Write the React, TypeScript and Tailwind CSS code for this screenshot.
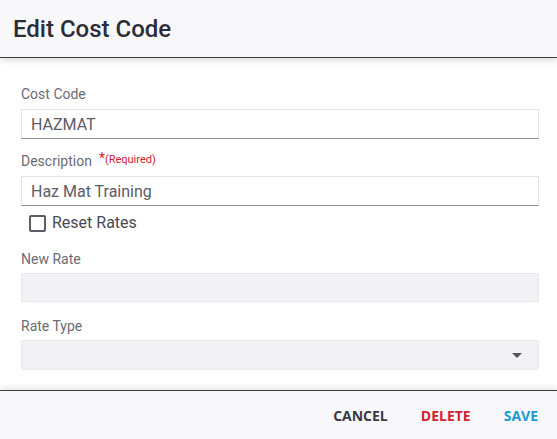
import { useState } from "react";

const Label = ({ children }: { children: React.ReactNode }) => (
  <label className="block text-[14px] leading-4 text-[#6b6b75]">{children}</label>
);

export default function App() {
  const [reset, setReset] = useState(false);

  return (
    <div className="w-[557px] h-[439px] bg-white flex flex-col overflow-hidden font-['Roboto',sans-serif]">
      <div className="relative z-10 h-[58px] shrink-0 bg-[#f8f8fa] border-b border-[#3b3b46] shadow-[0_3px_6px_rgba(0,0,0,0.12)] flex items-center pl-[13px]">
        <h1 className="text-[24px] font-medium text-[#2c2c38]">Edit Cost Code</h1>
      </div>

      <div className="flex-1 pl-[21px] pr-[18px] pt-[28px]">
        <Label>Cost Code</Label>
        <input
          defaultValue="HAZMAT"
          className="mt-[7px] block w-full h-[30px] px-[9px] text-[16px] text-[#5c5c66] border border-[#e4e4e8] border-b-[#8c8c94] outline-none"
        />

        <div className="mt-[14px] flex items-start">
          <Label>Description</Label>
          <span className="ml-[7px] -mt-[1px] text-[11px] leading-3 text-[#d6202f]">
            <span className="text-[14px]">*</span>(Required)
          </span>
        </div>
        <input
          defaultValue="Haz Mat Training"
          className="mt-[7px] block w-full h-[30px] px-[9px] text-[16px] text-[#5c5c66] border border-[#e4e4e8] border-b-[#8c8c94] outline-none"
        />

        <label className="mt-[7px] ml-[8px] flex items-center gap-[6px] cursor-pointer">
          <span
            onClick={() => setReset(!reset)}
            className="w-[17px] h-[17px] rounded-[2px] border-2 border-[#5c5c66] bg-white"
          />
          <span className="text-[16px] leading-5 text-[#4a4a54]">Reset Rates</span>
        </label>

        <div className="mt-[18px]">
          <Label>New Rate</Label>
        </div>
        <div className="mt-[6px] h-[29px] rounded-[2px] bg-[#f2f2f6] border border-[#e8e8ec]" />

        <div className="mt-[16px]">
          <Label>Rate Type</Label>
        </div>
        <div className="mt-[6px] h-[30px] rounded-[2px] bg-[#f2f2f6] border border-[#e8e8ec] flex items-center justify-end pr-[16px]">
          <svg width="10" height="5" viewBox="0 0 10 5">
            <path d="M0 0 L10 0 L5 5 Z" fill="#55555e" />
          </svg>
        </div>
      </div>

      <div className="relative h-[49px] shrink-0 bg-[#f8f8fa] border-t border-[#3b3b46] shadow-[0_-3px_6px_rgba(0,0,0,0.08)] flex items-center justify-end gap-[33px] pr-[19px] font-['Open_Sans',sans-serif] text-[14px] font-bold">
        <button className="text-[#383846]">CANCEL</button>
        <button className="text-[#d6202f]">DELETE</button>
        <button className="text-[#1a9ad6]">SAVE</button>
      </div>
    </div>
  );
}
